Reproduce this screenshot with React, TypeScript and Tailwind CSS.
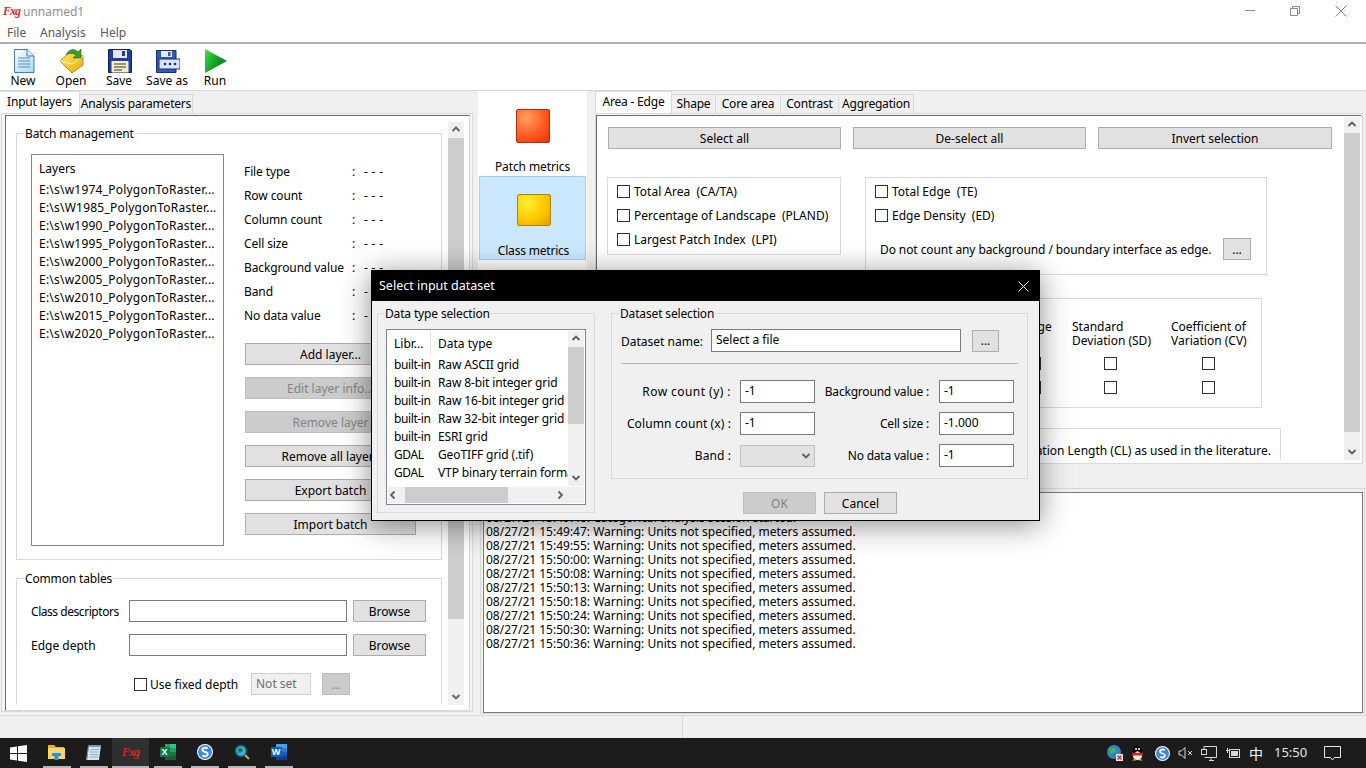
import React from 'react';

const LAYERS = ['w1974', 'W1985', 'w1990', 'w1995', 'w2000', 'w2005', 'w2010', 'w2015', 'w2020'];
const INFO = ['File type', 'Row count', 'Column count', 'Cell size', 'Background value', 'Band', 'No data value'];
const DATA_TYPES = [
  ['built-in', 'Raw ASCII grid'],
  ['built-in', 'Raw 8-bit integer grid'],
  ['built-in', 'Raw 16-bit integer grid'],
  ['built-in', 'Raw 32-bit integer grid'],
  ['built-in', 'ESRI grid'],
  ['GDAL', 'GeoTIFF grid (.tif)'],
  ['GDAL', 'VTP binary terrain format (.bt)'],
  ['', 'Arc/Info ASCII grid (.asc)'],
];
const LOG_TIMES = ['15:49:47', '15:49:55', '15:50:00', '15:50:08', '15:50:13', '15:50:18', '15:50:24', '15:50:30', '15:50:36'];

const Arrow = ({ dir }: { dir: 'up' | 'down' | 'left' | 'right' }) => {
  const d = {
    up: 'M1.5 6 L5 2.5 L8.5 6',
    down: 'M1.5 3 L5 6.5 L8.5 3',
    left: 'M6.5 1.5 L3 5 L6.5 8.5',
    right: 'M3.5 1.5 L7 5 L3.5 8.5',
  }[dir];
  return (
    <svg width="10" height="10" viewBox="0 0 10 10" className="shrink-0">
      <path d={d} fill="none" stroke="#606060" strokeWidth="1.8" />
    </svg>
  );
};

const VScroll = ({ thumb, className }: { thumb: number; className: string }) => (
  <div className={`flex flex-col bg-[#f0f0f0] w-[16px] shrink-0 ${className}`}>
    <div className="h-[16px] flex items-center justify-center shrink-0"><Arrow dir="up" /></div>
    <div className="flex-1">
      <div className="bg-[#cdcdcd] w-full" style={{ height: thumb }} />
    </div>
    <div className="h-[16px] flex items-center justify-center shrink-0"><Arrow dir="down" /></div>
  </div>
);

const Btn = ({ children, className = '', disabled = false }: { children: React.ReactNode; className?: string; disabled?: boolean }) => (
  <div
    className={`flex items-center justify-center shrink-0 border pt-[1px] ${
      disabled ? 'bg-[#cccccc] border-[#bfbfbf] text-[#838383]' : 'bg-[#e1e1e1] border-[#adadad]'
    } ${className}`}
  >
    {children}
  </div>
);

const Check = ({ className = '' }: { className?: string }) => (
  <div className={`w-[13px] h-[13px] border border-[#333333] bg-white shrink-0 ${className}`} />
);

const CheckRow = ({ label }: { label: string }) => (
  <div className="flex items-center gap-[4px] h-[24px]">
    <Check />
    <span className="whitespace-pre pt-[1px]">{label}</span>
  </div>
);

const Group = ({ title, className }: { title: string; className: string }) => (
  <span className={`absolute top-[-8px] h-[16px] leading-[16px] px-[1px] whitespace-nowrap tracking-[-0.15px] ${className}`}>{title}</span>
);

const Tab = ({ label, active = false, className = '' }: { label: string; active?: boolean; className?: string }) => (
  <div
    className={`flex items-center justify-center shrink-0 whitespace-nowrap tracking-[-0.2px] border-[#d9d9d9] ${
      active ? 'h-[22px] bg-white border-t border-r pb-[1px]' : 'h-[19px] bg-[#f0f0f0] border-t border-r'
    } ${className}`}
  >
    {label}
  </div>
);

const Field = ({ value, className = '' }: { value: string; className?: string }) => (
  <div className={`h-[23px] border border-[#7a7a7a] bg-white pl-[4px] leading-[19px] shrink-0 ${className}`}>{value}</div>
);

const TitleBar = () => (
  <div className="h-[22px] bg-white flex items-center shrink-0">
    <span className="ml-[3px] w-[20px] text-[#e8262c] text-[12px] font-bold italic font-['Liberation_Serif'] tracking-[-1px]">Fxg</span>
    <span className="text-[#8f8f8f] text-[12px] pt-[1px]">unnamed1</span>
    <div className="ml-auto flex items-center">
      <svg width="12" height="12" viewBox="0 0 12 12" className="mr-[33px]"><path d="M1 5.5H11" stroke="#8a8a8a" /></svg>
      <svg width="12" height="12" viewBox="0 0 12 12" className="mr-[34px]"><path d="M1.5 3.5H8.5V10.5H1.5Z M3.5 3.5V1.5H10.5V8.5H8.5" fill="none" stroke="#8a8a8a" /></svg>
      <svg width="12" height="12" viewBox="0 0 12 12" className="mr-[19px]"><path d="M0.5 0.5L11.5 11.5M11.5 0.5L0.5 11.5" stroke="#8a8a8a" /></svg>
    </div>
  </div>
);

const NewIcon = () => (
  <svg width="24" height="26" viewBox="0 0 24 26">
    <defs>
      <linearGradient id="newg" x1="0" y1="0" x2="1" y2="1">
        <stop offset="0" stopColor="#ffffff" />
        <stop offset="1" stopColor="#a9d6f3" />
      </linearGradient>
    </defs>
    <path d="M2.5 1.5H15L22 8V24.5H2.5Z" fill="url(#newg)" stroke="#3f7fb5" />
    <path d="M15 1.5V8H22" fill="#d8eefa" stroke="#3f7fb5" />
    <path d="M6 10H18M6 13H18M6 16H18M6 19H18" stroke="#4a8cc4" />
  </svg>
);

const OpenIcon = () => (
  <svg width="26" height="26" viewBox="0 0 26 26">
    <defs>
      <linearGradient id="openg" x1="0" y1="0" x2="1" y2="1">
        <stop offset="0" stopColor="#ffe96a" />
        <stop offset="1" stopColor="#eea800" />
      </linearGradient>
    </defs>
    <path d="M1 13L11 4L24 8V17L13 25Z" fill="url(#openg)" stroke="#c08a10" />
    <path d="M1 13L13 16L24 8" fill="none" stroke="#fff6c0" />
    <path d="M7 7C10 1 15 0 19 4L22 1V10H14L17 7C14 5 10 5 7 7Z" fill="#3f9a2a" stroke="#2a701c" strokeWidth="0.6" />
  </svg>
);

const SaveIcon = () => (
  <svg width="24" height="24" viewBox="0 0 24 24">
    <path d="M0.5 0.5H22L23.5 2V23.5H0.5Z" fill="#1f3f9e" stroke="#10205c" />
    <rect x="5" y="1" width="14" height="8" fill="#e4e8f2" />
    <rect x="14" y="2" width="3" height="5" fill="#1f3f9e" />
    <rect x="3.5" y="12" width="17" height="11.5" fill="#f4efc4" />
    <path d="M6 15H18M6 18H18M6 21H14" stroke="#3a3a3a" />
  </svg>
);

const SaveAsIcon = () => (
  <svg width="24" height="24" viewBox="0 0 24 24">
    <path d="M0.5 1.5H20V23.5H0.5Z" fill="#2f5cb8" stroke="#1a2f70" />
    <rect x="5" y="2" width="11" height="6" fill="#e4e8f2" />
    <rect x="12" y="3" width="2.5" height="4" fill="#2f5cb8" />
    <rect x="3" y="10" width="21" height="10" fill="#d9e4f5" stroke="#1a2f70" />
    <circle cx="9" cy="15" r="1.3" fill="#1a2f70" />
    <circle cx="14" cy="15" r="1.3" fill="#1a2f70" />
    <circle cx="19" cy="15" r="1.3" fill="#1a2f70" />
  </svg>
);

const RunIcon = () => (
  <svg width="24" height="26" viewBox="0 0 24 26">
    <defs>
      <linearGradient id="rung" x1="0" y1="0" x2="1" y2="0.6">
        <stop offset="0" stopColor="#45e045" />
        <stop offset="0.55" stopColor="#13a526" />
        <stop offset="1" stopColor="#0b7a1c" />
      </linearGradient>
    </defs>
    <path d="M1 1L23 13L1 25Z" fill="url(#rung)" />
  </svg>
);

const Toolbar = () => {
  const items: [string, React.ReactNode][] = [
    ['New', <NewIcon />],
    ['Open', <OpenIcon />],
    ['Save', <SaveIcon />],
    ['Save as', <SaveAsIcon />],
    ['Run', <RunIcon />],
  ];
  return (
    <div className="h-[47px] bg-white border-b border-[#d9d9d9] flex shrink-0">
      <div className="flex -ml-[1px]">
        {items.map(([label, icon]) => (
          <div key={label} className="w-[48px] flex flex-col items-center">
            <div className="h-[30px] pt-[3px] pl-[2px] flex items-center justify-center">{icon}</div>
            <span className="leading-[14px]">{label}</span>
          </div>
        ))}
      </div>
    </div>
  );
};

const LeftPanel = () => (
  <div className="w-[473px] shrink-0 flex flex-col">
    <div className="h-[22px] flex items-end">
      <Tab label="Input layers" active className="w-[80px] border-l-0" />
      <Tab label="Analysis parameters" className="w-[113px]" />
    </div>
    <div className="ml-[1px] w-[472px] h-[599px] border border-[#d9d9d9] bg-[#f5f5f5] pl-[3px] pt-[1px]">
      <div className="w-[465px] h-[596px] bg-white border-l border-t border-[#696969] border-r-[#d9d9d9] border-r border-b border-b-[#d9d9d9] flex">
        <div className="w-[442px] h-[589px] overflow-hidden shrink-0">
          <div className="relative ml-[10px] mt-[17px] w-[426px] h-[427px] border border-[#d9d9d9] flex pl-[14px] pt-[20px]">
            <Group title="Batch management" className="left-[7px] bg-white" />
            <div className="w-[193px] h-[392px] border border-[#828790] shrink-0 pl-[7px]">
              <div className="h-[26px] leading-[28px]">Layers</div>
              <div>
                {LAYERS.map((l) => (
                  <div key={l} className="h-[18px] leading-[18px] whitespace-nowrap tracking-[0.22px]">{`E:\\s\\${l}_PolygonToRaster...`}</div>
                ))}
              </div>
            </div>
            <div className="ml-[20px] pt-[5px] w-[175px]">
              {INFO.map((l) => (
                <div key={l} className="h-[24px] pt-[1px] flex items-center">
                  <span className="w-[108px] whitespace-nowrap tracking-[-0.1px]">{l}</span>
                  <span className="w-[12px]">:</span>
                  <span className="whitespace-pre tracking-[0.3px]">- - -</span>
                </div>
              ))}
              <div className="ml-[1px] mt-[16px] flex flex-col gap-[12px]">
                <Btn className="w-[171px] h-[22px]">Add layer...</Btn>
                <Btn className="w-[171px] h-[22px]" disabled>Edit layer info...</Btn>
                <Btn className="w-[171px] h-[22px]" disabled>Remove layer</Btn>
                <Btn className="w-[171px] h-[22px]">Remove all layers</Btn>
                <Btn className="w-[171px] h-[22px]">Export batch</Btn>
                <Btn className="w-[171px] h-[22px]">Import batch</Btn>
              </div>
            </div>
          </div>
          <div className="relative ml-[10px] mt-[18px] w-[426px] h-[160px] border border-[#d9d9d9] pl-[14px] pt-[21px]">
            <Group title="Common tables" className="left-[7px] bg-white" />
            <div className="flex items-center h-[22px]">
              <span className="w-[98px] pt-[1px] tracking-[-0.45px] whitespace-nowrap">Class descriptors</span>
              <div className="w-[218px] h-[22px] border border-[#7a7a7a]" />
              <Btn className="ml-[6px] w-[73px] h-[22px]">Browse</Btn>
            </div>
            <div className="flex items-center h-[22px] mt-[12px]">
              <span className="w-[98px] pt-[1px]">Edge depth</span>
              <div className="w-[218px] h-[22px] border border-[#7a7a7a]" />
              <Btn className="ml-[6px] w-[73px] h-[22px]">Browse</Btn>
            </div>
            <div className="flex items-center h-[22px] mt-[17px] ml-[103px]">
              <Check />
              <span className="ml-[3px] w-[101px] pt-[1px]">Use fixed depth</span>
              <div className="w-[60px] h-[22px] border border-[#cfcfcf] bg-[#f0f0f0] pl-[4px] leading-[19px] text-[#6d6d6d]">Not set</div>
              <Btn className="ml-[11px] w-[28px] h-[22px]" disabled>...</Btn>
            </div>
          </div>
        </div>
        <VScroll thumb={481} className="mt-[6px] h-[583px]" />
      </div>
    </div>
  </div>
);

const MetricList = () => (
  <div className="w-[109px] h-[384px] bg-white shrink-0 px-[1px] flex flex-col">
    <div className="h-[85px] flex flex-col items-center">
      <div className="mt-[18px] w-[34px] h-[34px] rounded-[2px] border border-[#b82a08] bg-[radial-gradient(circle_at_30%_25%,#ffa060_0%,#ff5a20_55%,#ee3008_100%)]" />
      <span className="mt-[16px] leading-[16px] tracking-[-0.1px]">Patch metrics</span>
    </div>
    <div className="h-[84px] bg-[#cce8ff] border border-[#99d1ff] flex flex-col items-center">
      <div className="mt-[17px] ml-[2px] w-[34px] h-[34px] rounded-[2px] border border-[#b08400] bg-[radial-gradient(circle_at_30%_25%,#fff030_0%,#ffc800_55%,#e0a000_100%)]" />
      <span className="mt-[17px] ml-[2px] leading-[16px] tracking-[-0.2px]">Class metrics</span>
    </div>
  </div>
);

const RightPanel = () => (
  <div className="ml-[8px] w-[768px] shrink-0 flex flex-col">
    <div className="h-[22px] flex items-end">
      <Tab label="Area - Edge" active className="w-[77px] border-l border-l-[#d9d9d9]" />
      <Tab label="Shape" className="w-[44px]" />
      <Tab label="Core area" className="w-[65px]" />
      <Tab label="Contrast" className="w-[58px]" />
      <Tab label="Aggregation" className="w-[75px]" />
    </div>
    <div className="w-[768px] h-[351px] border border-[#d9d9d9] bg-[#f5f5f5] pt-[1px] pr-[1px]">
      <div className="h-[348px] bg-white border-l border-t border-[#696969] flex">
        <div className="w-[747px] h-[344px] overflow-hidden shrink-0 pl-[10px] pt-[11px]">
          <div className="flex gap-[12px] pl-[1px]">
            <Btn className="w-[233px] h-[22px]">Select all</Btn>
            <Btn className="w-[233px] h-[22px]">De-select all</Btn>
            <Btn className="w-[234px] h-[22px]">Invert selection</Btn>
          </div>
          <div className="flex mt-[28px] items-start">
            <div className="w-[234px] h-[78px] border border-[#d9d9d9] pl-[9px] pt-[1px]">
              <CheckRow label="Total Area  (CA/TA)" />
              <CheckRow label="Percentage of Landscape  (PLAND)" />
              <CheckRow label="Largest Patch Index  (LPI)" />
            </div>
            <div className="ml-[24px] w-[402px] h-[98px] border border-[#d9d9d9] pl-[9px] pt-[1px]">
              <CheckRow label="Total Edge  (TE)" />
              <CheckRow label="Edge Density  (ED)" />
              <div className="flex items-center h-[22px] ml-[5px] mt-[11px]">
                <span className="w-[343px] whitespace-nowrap pt-[1px] tracking-[-0.09px]">Do not count any background / boundary interface as edge.</span>
                <Btn className="w-[28px] h-[22px]">...</Btn>
              </div>
            </div>
          </div>
          <div className="mt-[23px] w-[655px] h-[110px] border border-[#d9d9d9] flex justify-end pr-[13px] pt-[21px]">
            <div className="flex flex-col w-[36px] mr-[20px]">
              <div className="leading-[14px] h-[28px]">Range<br />(RA)</div>
              <Check className="mt-[9px] ml-[12px]" />
              <Check className="mt-[11px] ml-[12px]" />
            </div>
            <div className="flex flex-col w-[76px] mr-[23px]">
              <div className="leading-[14px] h-[28px] whitespace-nowrap">Standard<br />Deviation (SD)</div>
              <Check className="mt-[9px] ml-[32px]" />
              <Check className="mt-[11px] ml-[32px]" />
            </div>
            <div className="flex flex-col w-[77px]">
              <div className="leading-[14px] h-[28px] whitespace-nowrap">Coefficient of<br />Variation (CV)</div>
              <Check className="mt-[9px] ml-[31px]" />
              <Check className="mt-[11px] ml-[31px]" />
            </div>
          </div>
          <div className="mt-[20px] w-[674px] h-[60px] border border-[#d9d9d9] text-right pr-[9px] pt-[15px] leading-[14px]">
            Correlation Length (CL) as used in the literature.
          </div>
        </div>
        <VScroll thumb={299} className="mt-[1px] h-[343px]" />
      </div>
    </div>
  </div>
);

const LogPanel = () => (
  <div className="ml-[2px] mt-[13px] w-[885px] h-[226px] border border-[#d9d9d9] pl-[2px] pr-[2px] pt-[3px]">
    <div className="w-[880px] h-[221px] border border-[#7a7a7a] bg-white pl-[2px] pt-[18px] leading-[14px] overflow-hidden">
      <div>08/27/21 15:49:40: Categorical analysis session started.</div>
      {LOG_TIMES.map((t) => (
        <div key={t} className="whitespace-nowrap">{`08/27/21 ${t}: Warning: Units not specified, meters assumed.`}</div>
      ))}
    </div>
  </div>
);

const Win = () => (
  <svg width="17" height="17" viewBox="0 0 17 17">
    <path d="M0 2.5L7 1.5V8H0ZM8 1.3L17 0V8H8ZM0 9H7V15.5L0 14.5ZM8 9H17V17L8 15.7Z" fill="#ffffff" />
  </svg>
);

const Folder = () => (
  <svg width="17" height="16" viewBox="0 0 17 16">
    <path d="M0 1H6L8 3H16V5H0Z" fill="#e8b030" />
    <rect x="0" y="4" width="17" height="11" fill="#fbd667" />
    <rect x="4" y="9" width="9" height="3" fill="#2f8fd8" />
    <rect x="6.5" y="11" width="4" height="5" fill="#2f8fd8" />
  </svg>
);

const Notepad = () => (
  <svg width="16" height="17" viewBox="0 0 16 17">
    <path d="M3 1H15L13 16H1Z" fill="#d6e6ee" />
    <path d="M3 1H15L14.8 3H2.8Z" fill="#6d9db5" />
    <path d="M4.5 5.5H13M4 8H12.7M3.8 10.5H12.4M3.5 13H12" stroke="#8fb0c0" />
    <path d="M3 1L1 16H0L2 2Z" fill="#7fa4b5" />
  </svg>
);

const Excel = () => (
  <div className="relative w-[16px] h-[16px]">
    <div className="absolute right-0 top-0 w-[11px] h-[16px] grid grid-cols-2 grid-rows-4">
      <div className="bg-[#21a366]" /><div className="bg-[#33c481]" />
      <div className="bg-[#107c41]" /><div className="bg-[#21a366]" />
      <div className="bg-[#185c37]" /><div className="bg-[#107c41]" />
      <div className="bg-[#185c37]" /><div className="bg-[#185c37]" />
    </div>
    <div className="absolute left-0 top-[3px] w-[10px] h-[10px] bg-[#0f7b40] text-white text-[9px] leading-[10px] font-bold text-center">X</div>
  </div>
);

const Sogou = ({ size = 15 }: { size?: number }) => (
  <svg width={size} height={size} viewBox="0 0 15 15">
    <circle cx="7.5" cy="7.5" r="7.5" fill="#ffffff" />
    <circle cx="7.5" cy="7.5" r="6.5" fill="#3f86e0" />
    <path d="M10 4C8 3 5 3.5 5 5.5C5 8 10 7 10 9.5C10 11.5 7 12 5 11" fill="none" stroke="#ffffff" strokeWidth="1.8" />
  </svg>
);

const GlobeLens = () => (
  <svg width="16" height="16" viewBox="0 0 16 16">
    <circle cx="7" cy="7" r="6.5" fill="#0b4f7f" />
    <circle cx="7" cy="7" r="4.8" fill="#3fb0d8" />
    <path d="M4 5C6 3 8 4 9 6C8 9 6 8 4 9Z" fill="#1c7a4a" />
    <path d="M11 11L15 15" stroke="#d8a040" strokeWidth="2.2" />
  </svg>
);

const Word = () => (
  <div className="relative w-[16px] h-[16px]">
    <div className="absolute right-0 top-0 w-[11px] h-[16px] flex flex-col">
      <div className="h-[4px] bg-[#41a5ee]" />
      <div className="h-[4px] bg-[#2b7cd3]" />
      <div className="h-[4px] bg-[#185abd]" />
      <div className="h-[4px] bg-[#103f91]" />
    </div>
    <div className="absolute left-0 top-[3px] w-[11px] h-[10px] bg-[#185abd] text-white text-[9px] leading-[10px] font-bold text-center">W</div>
  </div>
);

const TrayGlobe = () => (
  <svg width="16" height="16" viewBox="0 0 16 16">
    <circle cx="7" cy="7" r="7" fill="#2a86c8" />
    <path d="M2 5C4 2 8 2 9 5C8 8 5 9 3 8Z" fill="#4fb04a" />
    <rect x="9" y="9" width="7" height="7" fill="#f0f0f0" />
    <path d="M10.5 10.5L14.5 14.5M14.5 10.5L10.5 14.5" stroke="#e03030" strokeWidth="1.6" />
  </svg>
);

const Penguin = () => (
  <svg width="15" height="16" viewBox="0 0 15 16">
    <ellipse cx="7.5" cy="6" rx="5.5" ry="6" fill="#000000" stroke="#3a3a3a" strokeWidth="0.5" />
    <ellipse cx="7.5" cy="11" rx="4.5" ry="4" fill="#f5f5f5" />
    <path d="M2 8H13L12.5 10.5H2.5Z" fill="#e02020" />
    <circle cx="6" cy="4" r="1" fill="#ffffff" />
    <circle cx="9" cy="4" r="1" fill="#ffffff" />
    <path d="M6 6H9L7.5 7.5Z" fill="#f0b020" />
    <path d="M2 15.5H6.5L5 13.5ZM8.5 15.5H13L10 13.5Z" fill="#f0a010" />
  </svg>
);

const Tray = () => (
  <div className="ml-auto flex items-center h-full text-[#e6e6e6]">
    <TrayGlobe />
    <div className="ml-[7px]"><Penguin /></div>
    <div className="ml-[10px]"><Sogou /></div>
    <svg width="15" height="14" viewBox="0 0 15 14" className="ml-[8px]">
      <path d="M1 5H3.5L7 1.5V12.5L3.5 9H1Z" fill="none" stroke="#d8d8d8" />
      <path d="M10 5L14 9M14 5L10 9" stroke="#d8d8d8" />
    </svg>
    <svg width="16" height="15" viewBox="0 0 16 15" className="ml-[8px]">
      <path d="M3 3.5V0.5H15.5V11.5H3.5M8 14.5H13M10 11.5V14.5" fill="none" stroke="#d8d8d8" />
      <rect x="0.5" y="3.5" width="5" height="5" fill="#1c1c1c" stroke="#d8d8d8" />
    </svg>
    <svg width="16" height="12" viewBox="0 0 16 12" className="ml-[8px]">
      <rect x="4.5" y="2.5" width="10" height="8" fill="none" stroke="#d8d8d8" />
      <rect x="6" y="4" width="7" height="5" fill="#d8d8d8" />
      <path d="M1 3.5H4M2.5 1V6" stroke="#d8d8d8" />
    </svg>
    <span className="ml-[8px] w-[15px] text-[14px] leading-[16px] text-white font-['Noto_Sans_CJK_SC',sans-serif]">中</span>
    <span className="ml-[10px] w-[32px] text-[13px]">15:50</span>
    <svg width="17" height="15" viewBox="0 0 17 15" className="ml-[18px] mr-[25px]">
      <path d="M0.5 0.5H16.5V11.5H10.5L8.5 14L6.5 11.5H0.5Z" fill="none" stroke="#e6e6e6" />
    </svg>
  </div>
);

const TaskSlot = ({ children, active = false }: { children: React.ReactNode; active?: boolean }) => (
  <div className={`w-[37px] h-full flex flex-col items-center ${active ? 'bg-[#2f2f2f]' : ''}`}>
    <div className="flex-1 flex items-center justify-center">{children}</div>
    <div className={`h-[2px] bg-[#b5b5b5] ${active ? 'w-[37px]' : 'w-[28px]'}`} />
  </div>
);

const Taskbar = () => (
  <div className="h-[30px] bg-[#1c1c1c] flex items-center shrink-0 relative">
    <div className="w-[38px] pl-[10px] flex"><Win /></div>
    <div className="flex h-full">
      <TaskSlot><Folder /></TaskSlot>
      <TaskSlot><Notepad /></TaskSlot>
      <TaskSlot active>
        <span className="text-[#d8262c] text-[12px] font-bold italic font-['Liberation_Serif'] tracking-[-1px]">Fxg</span>
      </TaskSlot>
      <TaskSlot><Excel /></TaskSlot>
      <TaskSlot><Sogou size={16} /></TaskSlot>
      <TaskSlot><GlobeLens /></TaskSlot>
      <TaskSlot><Word /></TaskSlot>
    </div>
    <Tray />
  </div>
);

const DataTypeGroup = () => (
  <div className="relative w-[218px] h-[200px] border border-[#d9d9d9] pl-[8px] pt-[15px] shrink-0">
    <Group title="Data type selection" className="left-[6px] bg-[#f0f0f0]" />
    <div className="w-[200px] h-[176px] border border-[#828790] bg-white flex flex-col">
      <div className="flex h-[156px] pt-[1px]">
        <div className="w-[181px] h-[154px] overflow-hidden shrink-0">
          <div className="flex h-[25px] items-center pl-[7px]">
            <span className="w-[37px] h-[25px] leading-[25px] border-r border-[#e5e5e5]">Libr...</span>
            <span className="ml-[7px]">Data type</span>
          </div>
          {DATA_TYPES.map(([lib, name]) => (
            <div key={name} className="flex h-[18px] leading-[18px] pl-[7px] whitespace-nowrap tracking-[-0.12px]">
              <span className="w-[44px] shrink-0 tracking-[-0.4px]">{lib}</span>
              <span>{name}</span>
            </div>
          ))}
        </div>
        <VScroll thumb={77} className="h-[155px] w-[15px]" />
      </div>
      <div className="ml-[1px] w-[196px] h-[16px] bg-[#f0f0f0] flex items-center justify-between mt-[1px] relative">
        <Arrow dir="left" />
        <div className="absolute left-[17px] top-0 w-[103px] h-[16px] bg-[#cdcdcd]" />
        <div className="mr-[19px]"><Arrow dir="right" /></div>
      </div>
    </div>
  </div>
);

const FormRow = ({ label, value, right, rightValue, band, wide }: { label: string; value?: string; right: string; rightValue: string; band?: boolean; wide?: boolean }) => (
  <div className="flex items-center h-[23px]">
    <span className={`w-[119px] text-right whitespace-nowrap ${wide ? 'tracking-[0.45px]' : 'tracking-[0.1px]'}`}>{label}</span>
    {band ? (
      <div className="ml-[9px] w-[75px] h-[22px] bg-[#e1e1e1] border border-[#c0c0c0] flex items-center justify-end pr-[3px] shrink-0">
        <Arrow dir="down" />
      </div>
    ) : (
      <Field value={value ?? ''} className="ml-[9px] w-[75px]" />
    )}
    <span className="w-[114px] text-right whitespace-nowrap tracking-[-0.2px]">{right}</span>
    <Field value={rightValue} className="ml-[10px] w-[75px]" />
  </div>
);

const DatasetGroup = () => (
  <div className="relative ml-[16px] w-[417px] h-[166px] border border-[#d9d9d9] pt-[15px] shrink-0">
    <Group title="Dataset selection" className="left-[7px] bg-[#f0f0f0]" />
    <div className="flex items-center h-[23px] pl-[9px]">
      <span className="w-[90px] pt-[3px]">Dataset name:</span>
      <Field value="Select a file" className="w-[250px]" />
      <Btn className="ml-[11px] w-[27px] h-[22px]">...</Btn>
    </div>
    <div className="ml-[9px] mt-[11px] w-[397px] border-t border-[#b5b5b5]" />
    <div className="mt-[16px] flex flex-col gap-[9px]">
      <FormRow label="Row count (y) :" wide value="-1" right="Background value :" rightValue="-1" />
      <FormRow label="Column count (x) :" value="-1" right="Cell size :" rightValue="-1.000" />
      <FormRow label="Band :" band right="No data value :" rightValue="-1" />
    </div>
  </div>
);

const Dialog = () => (
  <div className="absolute left-[371px] top-[270px] w-[669px] h-[251px] bg-[#f0f0f0] border border-black border-t-0 shadow-[0_4px_28px_rgba(0,0,0,0.45)] flex flex-col">
    <div className="h-[31px] bg-black text-white flex items-center justify-between pl-[7px] pr-[10px] pt-[1px] shrink-0 text-[12.5px]">
      <span>Select input dataset</span>
      <svg width="11" height="11" viewBox="0 0 11 11"><path d="M0.5 0.5L10.5 10.5M10.5 0.5L0.5 10.5" stroke="#ffffff" /></svg>
    </div>
    <div className="flex pl-[5px] pt-[12px]">
      <DataTypeGroup />
      <div className="flex flex-col">
        <DatasetGroup />
        <div className="flex gap-[8px] mt-[13px] ml-[148px]">
          <Btn className="w-[73px] h-[22px]" disabled>OK</Btn>
          <Btn className="w-[73px] h-[22px]">Cancel</Btn>
        </div>
      </div>
    </div>
  </div>
);

const App: React.FC = () => {
  return (
    <div className="relative w-[1366px] h-[768px] overflow-hidden flex flex-col bg-[#f0f0f0] text-black text-[12px] font-['Noto_Sans',sans-serif]">
      <TitleBar />
      <div className="h-[20px] bg-white flex items-center gap-[15px] pl-[7px] pt-[1px] text-[12px] text-[#5a5a5a] shrink-0">
        <span className="w-[18px]">File</span>
        <span className="w-[45px]">Analysis</span>
        <span>Help</span>
      </div>
      <div className="h-[2px] bg-[#b0b0b0] shrink-0" />
      <Toolbar />
      <div className="h-[624px] flex shrink-0">
        <LeftPanel />
        <div className="ml-[5px] flex flex-col">
          <div className="flex">
            <MetricList />
            <RightPanel />
          </div>
          <LogPanel />
        </div>
      </div>
      <div className="h-[23px] border-t border-[#d9d9d9] flex shrink-0">
        <div className="w-[683px] border-r border-[#d9d9d9]" />
      </div>
      <Taskbar />
      <Dialog />
    </div>
  );
};

export default App;
